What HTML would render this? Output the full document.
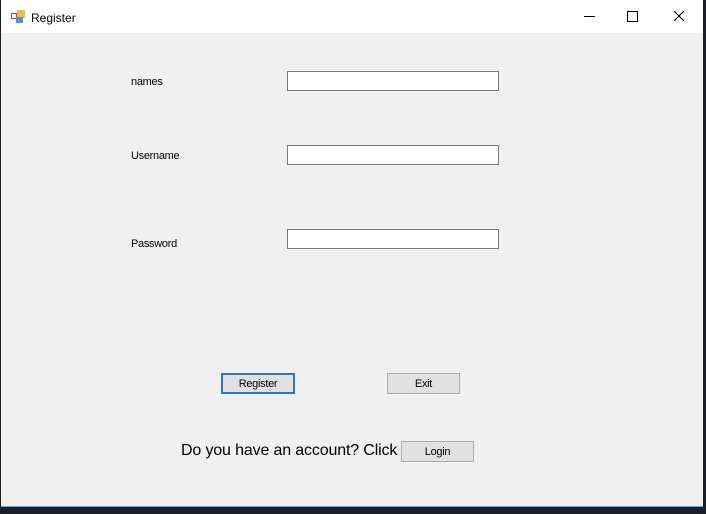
<!DOCTYPE html>
<html><head><style>
body{margin:0;width:706px;height:514px;background:#1a1f2a;position:relative;overflow:hidden;font-family:"Liberation Sans",sans-serif}
.win{position:absolute;left:1px;top:0;width:702px;height:506px;background:#f0f0f0;border-bottom:1px solid #6fa8d6}
.title{position:absolute;left:0;top:0;width:702px;height:33px;background:#fff}
.t{position:absolute;font-size:12px;color:#000}
.lbl{position:absolute;font-size:11px;color:#000;letter-spacing:-0.3px}
.inp{position:absolute;left:286px;width:210px;height:18px;background:#fff;border:1px solid #7a7a7a}
.btn{position:absolute;height:19px;background:#e1e1e1;border:1px solid #adadad;font-size:11px;text-align:center;line-height:21px;letter-spacing:-0.3px}
</style></head><body>
<div class="win">
<div class="title">
<svg style="position:absolute;left:10px;top:9px" width="15" height="15"><rect x="0" y="4" width="6" height="6" fill="#c33"/><rect x="6" y="1" width="8" height="8" fill="#e8c040"/><rect x="5" y="8" width="7" height="6" fill="#5a8fd0"/><rect x="1" y="5" width="4" height="4" fill="#fff"/></svg>
<div class="t" style="left:30px;top:11px">Register</div>
<div style="position:absolute;left:583px;top:16px;width:11px;height:1px;background:#000"></div>
<div style="position:absolute;left:626px;top:11px;width:9px;height:9px;border:1px solid #000"></div>
<svg style="position:absolute;left:672px;top:10px" width="12" height="12"><path d="M1 1L11 11M11 1L1 11" stroke="#000" stroke-width="1.2"/></svg>
</div>
<div class="lbl" style="left:130px;top:76px">names</div>
<div class="lbl" style="left:130px;top:150px">Username</div>
<div class="lbl" style="left:130px;top:238px">Password</div>
<div class="inp" style="top:71px"></div>
<div class="inp" style="top:145px"></div>
<div class="inp" style="top:229px"></div>
<div class="btn" style="left:220px;top:373px;width:70px;height:17px;line-height:19px;border:2px solid #2a78c8">Register</div>
<div class="btn" style="left:386px;top:373px;width:71px">Exit</div>
<div style="position:absolute;left:180px;top:442px;font-size:16px;color:#000;letter-spacing:-0.15px">Do you have an account? Click</div>
<div class="btn" style="left:400px;top:441px;width:71px">Login</div>
</div>
</body></html>
